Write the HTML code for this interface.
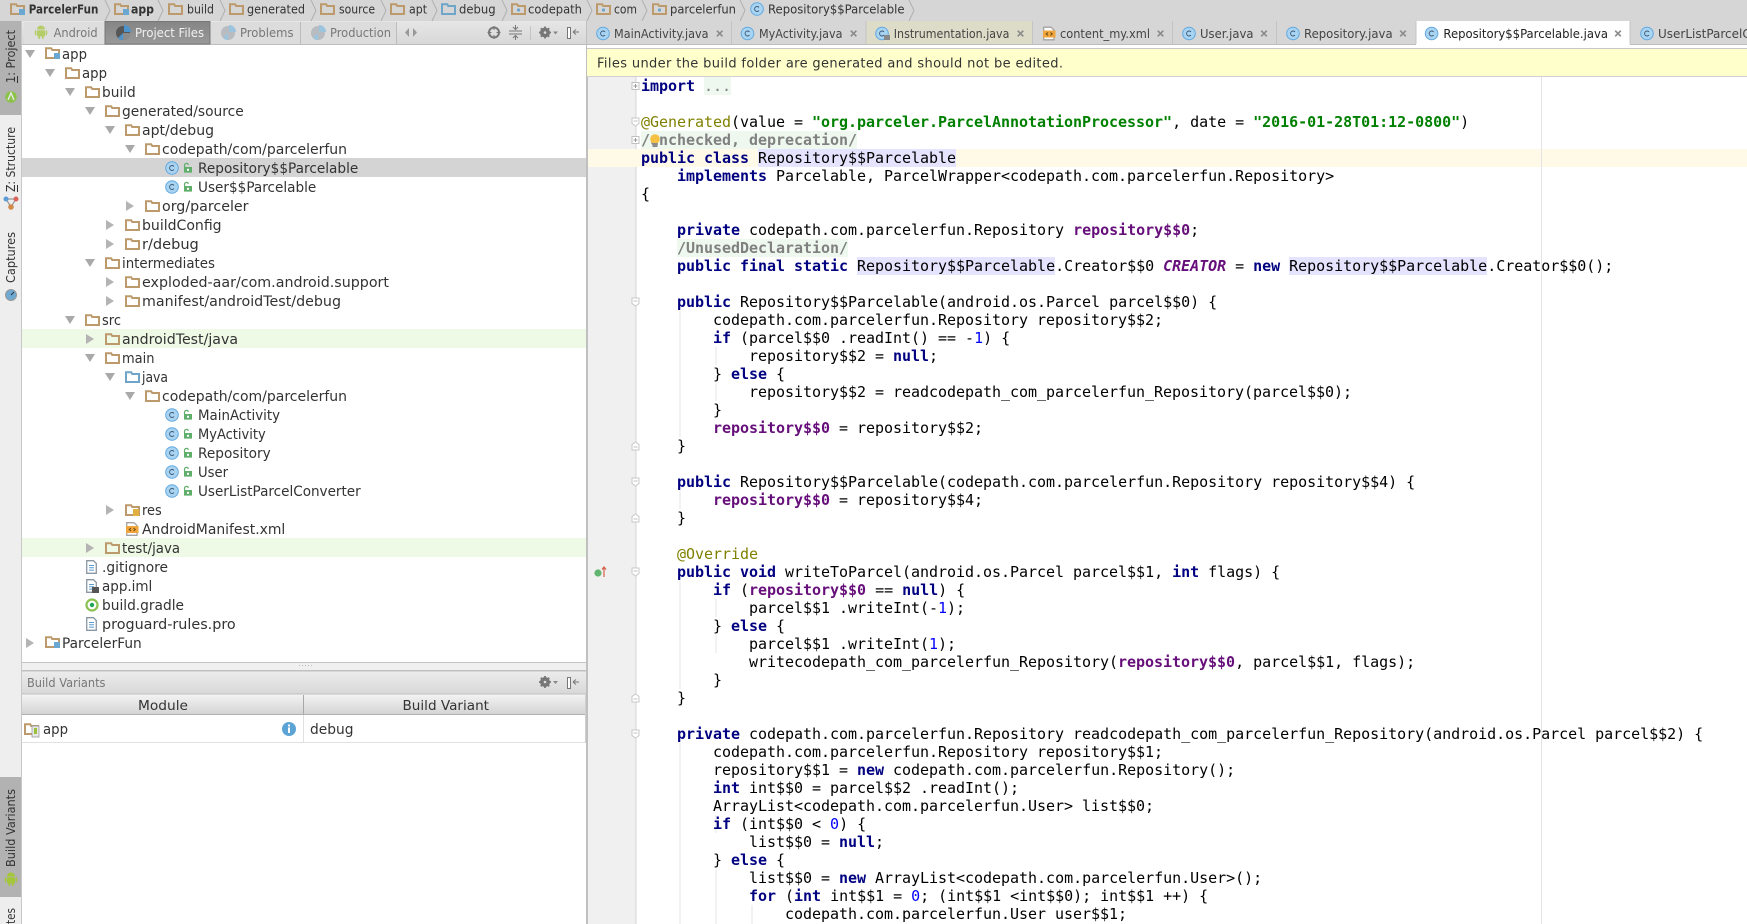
<!DOCTYPE html>
<html><head><meta charset="utf-8"><title>ParcelerFun</title>
<style>
html,body{margin:0;padding:0;background:#fff}
#p{position:relative;width:1747px;height:924px;overflow:hidden;background:#fff}
svg{position:absolute;left:0;top:0}
text{font-family:"DejaVu Sans",sans-serif;white-space:pre}
.t{font-size:14px;fill:#333}
.c{font-size:12px;fill:#444}
.tb{font-size:12px;fill:#555}
.s{font-size:12px;fill:#333}
pre{position:absolute;left:641px;top:77px;margin:0;font:15px/18px "DejaVu Sans Mono",monospace;letter-spacing:-.03px;color:#000;white-space:pre}
b{color:#000080;font-weight:bold}
.g{color:#008000;font-weight:bold}
.a{color:#808000}
.f{color:#660e7a;font-weight:bold}
.n{color:#0000ff}
.d{color:#808080;font-weight:bold;background:#eef8ee}
.u{background:#e4e4ff}
i{color:#660e7a;font-weight:bold;font-style:italic}
</style></head><body><div id="p">
<svg width="1747" height="924" viewBox="0 0 1747 924">
<defs>
<linearGradient id="hg" x1="0" y1="0" x2="0" y2="1"><stop offset="0" stop-color="#ececec"/><stop offset="1" stop-color="#d8d8d8"/></linearGradient>
<linearGradient id="th" x1="0" y1="0" x2="0" y2="1"><stop offset="0" stop-color="#f4f4f4"/><stop offset="1" stop-color="#d4d4d4"/></linearGradient>
<linearGradient id="tw" x1="0" y1="0" x2="0" y2="1"><stop offset="0" stop-color="#e6e6e6"/><stop offset="1" stop-color="#d8d8d8"/></linearGradient>
<linearGradient id="ta" x1="0" y1="0" x2="0" y2="1"><stop offset="0" stop-color="#858585"/><stop offset="1" stop-color="#999999"/></linearGradient>
<g id="fo"><path d="M1 11V1.200H6.200L7.200 3H14V11Z" fill="none" stroke="#bd9a6b" stroke-width="2"/></g>
<g id="fb"><path d="M1 11V1.200H6.200L7.200 3H14V11Z" fill="none" stroke="#6ea5c8" stroke-width="2"/></g>
<g id="fm"><path d="M1 11V1.200H6.200L7.200 3H14V11Z" fill="none" stroke="#bd9a6b" stroke-width="2"/><rect x="9" y="6" width="6" height="6" fill="#6aa8d2"/></g>
<g id="fp"><path d="M1 11V1.200H6.200L7.200 3H14V11Z" fill="none" stroke="#bd9a6b" stroke-width="2"/><circle cx="7.500" cy="7" r="1.600" fill="#6ea5c8"/></g>
<g id="da"><path d="M-5 -4H5L0 4Z" fill="#a9a9a9"/></g>
<g id="ra"><path d="M-4 -5V5L4 0Z" fill="#b4b4b4"/></g>
<g id="cl"><circle cx="7" cy="7" r="6.300" fill="#a8d4f2" stroke="#62a8e0" stroke-width="1"/><path d="M9 5.400A2.500 2.500 0 1 0 9 8.600" fill="none" stroke="#3c5878" stroke-width=".9"/></g>
<g id="lk"><path d="M1.500 4V2.300A2 2 0 0 1 5.400 1.800" fill="none" stroke="#5fae6a" stroke-width="1.200"/><rect x="1" y="4" width="8" height="5.600" fill="#5fae6a"/><rect x="4" y="5.800" width="2" height="2" fill="#fff"/></g>
<g id="pie"><circle cx="7" cy="8.500" r="7" fill="#b8bcc0"/><path d="M8 7.500V.500A7 7 0 0 1 15 7.500Z" fill="#9cc4de"/><path d="M7 8.500L2 13.500A7 7 0 0 0 7 15.500Z" fill="#9cc4de"/></g>
<g id="pa"><circle cx="7" cy="8.500" r="7" fill="#565656"/><path d="M8 7.500V.500A7 7 0 0 1 15 7.500Z" fill="#4d94cc"/><path d="M7 8.500L2 13.500A7 7 0 0 0 7 15.500Z" fill="#4d94cc"/><path d="M7 8.500H14A7 7 0 0 1 7 15.500Z" fill="#8c8c8c"/></g>
<g id="and"><path d="M3 5.500A4 4 0 0 1 11 5.500Z" fill="#a4c639"/><rect x="3" y="6.200" width="8" height="6.300" rx="1" fill="#a4c639"/><rect x=".8" y="6.200" width="1.600" height="5" rx=".8" fill="#a4c639"/><rect x="11.600" y="6.200" width="1.600" height="5" rx=".8" fill="#a4c639"/><rect x="4.400" y="12" width="1.700" height="3" rx=".8" fill="#a4c639"/><rect x="7.900" y="12" width="1.700" height="3" rx=".8" fill="#a4c639"/></g>
<g id="x"><path d="M-2.800 -2.800L2.800 2.800M2.800 -2.800L-2.800 2.800" stroke="#8c8c8c" stroke-width="1.700"/></g>
<g id="ch"><path d="M0 0L5 10.500L0 21" fill="none" stroke="#b0b0b0" stroke-width="1"/></g>
<g id="gear"><circle cx="6" cy="6" r="3.600" fill="none" stroke="#777" stroke-width="2.800"/><path d="M6 0V12M0 6H12M1.800 1.800L10.200 10.200M10.200 1.800L1.800 10.200" stroke="#777" stroke-width="1.800"/><circle cx="6" cy="6" r="1.300" fill="#e0e0e0"/><path d="M14 5H19L16.500 8Z" fill="#888"/></g>
<g id="hide"><path d="M.5 .5H3.500V11.500H.5Z" fill="#fff" stroke="#777"/><path d="M6 5H12M6 5L9 2.500M6 5L9 7.500" fill="none" stroke="#777"/></g>
<g id="doc"><path d="M.7 .7H7.500L10.300 3.500V13.300H.7Z" fill="#fff" stroke="#8a97a3" stroke-width="1.300"/><path d="M3 5.500H8M3 7.800H8M3 10.100H8" stroke="#5b9bd0" stroke-width="1"/></g>
<g id="xml"><path d="M.7 .7H8L11 3.500V13.300H.7Z" fill="#fff" stroke="#a3a3a3" stroke-width="1.300"/><rect x="0" y="4" width="12.500" height="7" fill="#f0a63c"/><path d="M5 6L3.200 7.500L5 9M7.500 6L9.300 7.500L7.500 9" fill="none" stroke="#6b4a12"/></g>
<g id="fold"><path d="M-3.500 -4H3.500V1.500L0 4L-3.500 1.500Z" fill="#fff" stroke="#c8c8c8"/><path d="M-2 -1H2" stroke="#c0c0c0"/></g>
<g id="foldp"><rect x="-3.500" y="-3.500" width="7" height="7" fill="#fff" stroke="#c0c0c0"/><path d="M-2 0H2M0 -2V2" stroke="#999"/></g>
</defs>

<!-- chrome backgrounds -->
<rect x="0" y="0" width="1747" height="21" fill="#d6d6d6"/>
<rect x="0" y="21" width="21" height="903" fill="#eeeeee"/>
<rect x="21" y="21" width="1" height="903" fill="#c8c8c8"/>
<rect x="0" y="21" width="21" height="94" fill="#b2b2b2"/>
<rect x="0" y="777" width="21" height="120" fill="#b2b2b2"/>

<!-- tool window tabs -->
<rect x="22" y="21" width="564" height="23" fill="url(#tw)"/>
<rect x="22" y="44" width="565" height="1" fill="#bdbdbd"/>
<rect x="24" y="22" width="81" height="22" fill="#dedede"/>
<rect x="105" y="21.500" width="105" height="22.500" fill="url(#ta)" stroke="#777"/>
<rect x="211" y="22" width="89" height="22" fill="#dcdcdc"/>
<rect x="301" y="22" width="95" height="22" fill="#dcdcdc"/>
<path d="M300.500 22V44M396.500 22V44" stroke="#bcbcbc"/>
<use href="#and" x="34" y="24" opacity=".7"/>
<text class="tb" x="53.600" y="37" textLength="44" lengthAdjust="spacingAndGlyphs" style="fill:#777">Android</text>
<use href="#pa" x="116" y="24.500"/>
<text class="tb" x="135" y="37" textLength="69" lengthAdjust="spacingAndGlyphs" style="fill:#f2f2f2">Project Files</text>
<use href="#pie" x="221" y="24.500"/>
<text class="tb" x="240" y="37" textLength="53.500" lengthAdjust="spacingAndGlyphs" style="fill:#777">Problems</text>
<use href="#pie" x="311" y="24.500"/>
<text class="tb" x="330" y="37" textLength="61" lengthAdjust="spacingAndGlyphs" style="fill:#777">Production</text>
<path d="M409 28V37L405 32.500ZM413 28V37L417 32.500Z" fill="#999"/>
<circle cx="494" cy="32.500" r="5" fill="none" stroke="#777" stroke-width="2"/><path d="M494 26V30M494 35V39M487.500 32.500H491.500M496.500 32.500H500.500" stroke="#777"/>
<path d="M509 31H522M509 34H522M515.500 25V29M515.500 36V40M513 27L515.500 29.500L518 27M513 38L515.500 35.500L518 38" fill="none" stroke="#777"/>
<path d="M530.500 26V40" stroke="#c4c4c4"/>
<use href="#gear" x="539" y="26.500"/>
<use href="#hide" x="567" y="27"/>

<!-- breadcrumb -->
<use href="#fm" x="10" y="3"/><text class="s" x="28.700" y="13.500" textLength="69.700" lengthAdjust="spacingAndGlyphs" font-weight="bold">ParcelerFun</text><use href="#ch" x="105"/>
<use href="#fm" x="114" y="3"/><text class="s" x="131" y="13.500" textLength="23" lengthAdjust="spacingAndGlyphs" font-weight="bold">app</text><use href="#ch" x="158"/>
<use href="#fo" x="168" y="3"/><text class="s" x="187" y="13.500" textLength="27" lengthAdjust="spacingAndGlyphs">build</text><use href="#ch" x="220"/>
<use href="#fo" x="229" y="3"/><text class="s" x="247" y="13.500" textLength="58" lengthAdjust="spacingAndGlyphs">generated</text><use href="#ch" x="311"/>
<use href="#fo" x="320" y="3"/><text class="s" x="339" y="13.500" textLength="36" lengthAdjust="spacingAndGlyphs">source</text><use href="#ch" x="381"/>
<use href="#fo" x="390" y="3"/><text class="s" x="409" y="13.500" textLength="18" lengthAdjust="spacingAndGlyphs">apt</text><use href="#ch" x="432"/>
<use href="#fb" x="441" y="3"/><text class="s" x="459" y="13.500" textLength="36.600" lengthAdjust="spacingAndGlyphs">debug</text><use href="#ch" x="502"/>
<use href="#fp" x="511" y="3"/><text class="s" x="528" y="13.500" textLength="54" lengthAdjust="spacingAndGlyphs">codepath</text><use href="#ch" x="587"/>
<use href="#fp" x="596" y="3"/><text class="s" x="614" y="13.500" textLength="23" lengthAdjust="spacingAndGlyphs">com</text><use href="#ch" x="642"/>
<use href="#fp" x="652" y="3"/><text class="s" x="670" y="13.500" textLength="66" lengthAdjust="spacingAndGlyphs">parcelerfun</text><use href="#ch" x="740"/>
<use href="#cl" x="750" y="2"/><text class="s" x="768" y="13.500" textLength="136.500" lengthAdjust="spacingAndGlyphs">Repository$$Parcelable</text><use href="#ch" x="909"/>

<!-- editor tabs -->
<rect x="587" y="21" width="1160" height="23" fill="#d6d6d6"/>
<rect x="866" y="21" width="167" height="23" fill="#dcdcc8"/>
<rect x="1416" y="21" width="214" height="24" fill="#ffffff"/>
<path d="M731.500 21V44M866 21V44M1032.500 21V44M1172.500 21V44M1276.500 21V44M1416 21V44M1630 21V44" stroke="#c4c4c4"/>
<rect x="587" y="44" width="829" height="1" fill="#bdbdbd"/><rect x="1630" y="44" width="117" height="1" fill="#bdbdbd"/>
<use href="#cl" x="596" y="26.500"/><text class="c" x="614" y="38" textLength="94.600" lengthAdjust="spacingAndGlyphs">MainActivity.java</text><use href="#x" x="719.700" y="33.500"/>
<use href="#cl" x="740.500" y="26.500"/><text class="c" x="759" y="38" textLength="83.500" lengthAdjust="spacingAndGlyphs">MyActivity.java</text><use href="#x" x="853.600" y="33.500"/>
<use href="#cl" x="875" y="26.500"/><rect x="884" y="35" width="6" height="5" fill="#888"/><text class="c" x="893.800" y="38" textLength="115.600" lengthAdjust="spacingAndGlyphs">Instrumentation.java</text><use href="#x" x="1020.500" y="33.500"/>
<use href="#xml" x="1043" y="26.500"/><text class="c" x="1060" y="38" textLength="90" lengthAdjust="spacingAndGlyphs">content_my.xml</text><use href="#x" x="1160.500" y="33.500"/>
<use href="#cl" x="1182" y="26.500"/><text class="c" x="1200" y="38" textLength="53.500" lengthAdjust="spacingAndGlyphs">User.java</text><use href="#x" x="1264" y="33.500"/>
<use href="#cl" x="1286" y="26.500"/><text class="c" x="1304" y="38" textLength="88.600" lengthAdjust="spacingAndGlyphs">Repository.java</text><use href="#x" x="1403" y="33.500"/>
<use href="#cl" x="1424.600" y="26.500"/><text class="c" x="1443.400" y="38" textLength="164.600" lengthAdjust="spacingAndGlyphs" style="fill:#222">Repository$$Parcelable.java</text><use href="#x" x="1618" y="33.500"/>
<use href="#cl" x="1640" y="26.500"/><text class="c" x="1658" y="38">UserListParcelC</text>

<!-- banner -->
<rect x="587" y="45" width="1160" height="3" fill="#fff"/>
<rect x="587" y="48" width="1160" height="28" fill="#ffffcc"/>
<rect x="587" y="48" width="1160" height="1" fill="#c8c8c8"/>
<rect x="587" y="76" width="1160" height="1" fill="#d0d0d0"/>
<text x="597" y="67.500" font-size="13" fill="#333" textLength="466">Files under the build folder are generated and should not be edited.</text>

<!-- editor bg -->
<rect x="587" y="77" width="49" height="847" fill="#f0f0f0"/>
<rect x="635.500" y="77" width="1" height="847" fill="#d4d4d4"/>
<rect x="587" y="149" width="1160" height="18" fill="#fffae8"/>
<rect x="1541" y="77" width="1" height="847" fill="#e4e4e4"/>
<rect x="587" y="77" width="1" height="847" fill="#c0c0c0"/>
<rect x="586" y="21" width="1" height="903" fill="#bfbfbf"/>
<path d="M680 311V437M680 491V509M680 581V689M680 743V924M716 347V365M716 383V401M716 599V617M716 635V653M716 815V833M716 869V924M752 905V924" stroke="#e6e6e6"/>
<use href="#foldp" x="635.500" y="86"/><use href="#fold" x="635.500" y="122"/><use href="#foldp" x="635.500" y="140"/>
<use href="#fold" x="635.500" y="302"/><use href="#fold" x="635.500" y="446" transform="rotate(180 635.500 446)"/><use href="#fold" x="635.500" y="482"/><use href="#fold" x="635.500" y="518" transform="rotate(180 635.500 518)"/>
<use href="#fold" x="635.500" y="572"/><use href="#fold" x="635.500" y="698" transform="rotate(180 635.500 698)"/><use href="#fold" x="635.500" y="734"/>
<circle cx="598" cy="573" r="3.600" fill="#62b56e"/><path d="M604 577V567M602 569.500L604 567L606 569.500" fill="none" stroke="#d4604a" stroke-width="1.200"/>

<!-- tree -->
<rect x="22" y="45" width="564" height="617" fill="#fff"/>
<rect x="22" y="158" width="564" height="19" fill="#d4d4d4"/>
<rect x="22" y="329" width="564" height="19" fill="#eef9e6"/>
<rect x="22" y="538" width="564" height="19" fill="#eef9e6"/>
<use href="#da" x="30" y="54"/><use href="#fm" x="45" y="47"/><text class="t" x="62" y="59" textLength="25" lengthAdjust="spacingAndGlyphs">app</text>
<use href="#da" x="50" y="73"/><use href="#fo" x="65" y="67"/><text class="t" x="82" y="78" textLength="25" lengthAdjust="spacingAndGlyphs">app</text>
<use href="#da" x="70" y="92"/><use href="#fo" x="85" y="86"/><text class="t" x="102" y="97" textLength="33.700" lengthAdjust="spacingAndGlyphs">build</text>
<use href="#da" x="90" y="111"/><use href="#fo" x="105" y="105"/><text class="t" x="122" y="116" textLength="121.700" lengthAdjust="spacingAndGlyphs">generated/source</text>
<use href="#da" x="110" y="130"/><use href="#fo" x="125" y="124"/><text class="t" x="142" y="135" textLength="72" lengthAdjust="spacingAndGlyphs">apt/debug</text>
<use href="#da" x="130" y="149"/><use href="#fo" x="145" y="143"/><text class="t" x="162" y="154" textLength="185" lengthAdjust="spacingAndGlyphs">codepath/com/parcelerfun</text>
<use href="#cl" x="165" y="161"/><use href="#lk" x="183" y="163"/><text class="t" x="198" y="173" textLength="160.300" lengthAdjust="spacingAndGlyphs">Repository$$Parcelable</text>
<use href="#cl" x="165" y="180"/><use href="#lk" x="183" y="182"/><text class="t" x="198" y="192" textLength="118.300" lengthAdjust="spacingAndGlyphs">User$$Parcelable</text>
<use href="#ra" x="130" y="206"/><use href="#fo" x="145" y="200"/><text class="t" x="162" y="211" textLength="86.500" lengthAdjust="spacingAndGlyphs">org/parceler</text>
<use href="#ra" x="110" y="225"/><use href="#fo" x="125" y="219"/><text class="t" x="142" y="230" textLength="79.600" lengthAdjust="spacingAndGlyphs">buildConfig</text>
<use href="#ra" x="110" y="244"/><use href="#fo" x="125" y="238"/><text class="t" x="142" y="249" textLength="56.800" lengthAdjust="spacingAndGlyphs">r/debug</text>
<use href="#da" x="90" y="263"/><use href="#fo" x="105" y="257"/><text class="t" x="122" y="268" textLength="93" lengthAdjust="spacingAndGlyphs">intermediates</text>
<use href="#ra" x="110" y="282"/><use href="#fo" x="125" y="276"/><text class="t" x="142" y="287" textLength="247" lengthAdjust="spacingAndGlyphs">exploded-aar/com.android.support</text>
<use href="#ra" x="110" y="301"/><use href="#fo" x="125" y="295"/><text class="t" x="142" y="306" textLength="199" lengthAdjust="spacingAndGlyphs">manifest/androidTest/debug</text>
<use href="#da" x="70" y="320"/><use href="#fo" x="85" y="314"/><text class="t" x="102" y="325" textLength="19" lengthAdjust="spacingAndGlyphs">src</text>
<use href="#ra" x="90" y="339"/><use href="#fo" x="105" y="333"/><text class="t" x="122" y="344" textLength="116" lengthAdjust="spacingAndGlyphs">androidTest/java</text>
<use href="#da" x="90" y="358"/><use href="#fo" x="105" y="352"/><text class="t" x="122" y="363" textLength="32.500" lengthAdjust="spacingAndGlyphs">main</text>
<use href="#da" x="110" y="377"/><use href="#fb" x="125" y="371"/><text class="t" x="142" y="382" textLength="26" lengthAdjust="spacingAndGlyphs">java</text>
<use href="#da" x="130" y="396"/><use href="#fo" x="145" y="390"/><text class="t" x="162" y="401" textLength="185" lengthAdjust="spacingAndGlyphs">codepath/com/parcelerfun</text>
<use href="#cl" x="165" y="408"/><use href="#lk" x="183" y="410"/><text class="t" x="198" y="420" textLength="82" lengthAdjust="spacingAndGlyphs">MainActivity</text>
<use href="#cl" x="165" y="427"/><use href="#lk" x="183" y="429"/><text class="t" x="198" y="439" textLength="67.700" lengthAdjust="spacingAndGlyphs">MyActivity</text>
<use href="#cl" x="165" y="446"/><use href="#lk" x="183" y="448"/><text class="t" x="198" y="458" textLength="72.700" lengthAdjust="spacingAndGlyphs">Repository</text>
<use href="#cl" x="165" y="465"/><use href="#lk" x="183" y="467"/><text class="t" x="198" y="477" textLength="30" lengthAdjust="spacingAndGlyphs">User</text>
<use href="#cl" x="165" y="484"/><use href="#lk" x="183" y="486"/><text class="t" x="198" y="496" textLength="162.700" lengthAdjust="spacingAndGlyphs">UserListParcelConverter</text>
<use href="#ra" x="110" y="510"/><use href="#fo" x="125" y="504"/><rect x="133" y="509" width="6" height="7" fill="#e0b040"/><text class="t" x="142" y="515" textLength="19.700" lengthAdjust="spacingAndGlyphs">res</text>
<use href="#xml" x="126" y="522"/><text class="t" x="142" y="534" textLength="143.300" lengthAdjust="spacingAndGlyphs">AndroidManifest.xml</text>
<use href="#ra" x="90" y="548"/><use href="#fo" x="105" y="542"/><text class="t" x="122" y="553" textLength="58" lengthAdjust="spacingAndGlyphs">test/java</text>
<use href="#doc" x="86" y="560"/><text class="t" x="102" y="572" textLength="66" lengthAdjust="spacingAndGlyphs">.gitignore</text>
<use href="#doc" x="86" y="579"/><rect x="92" y="587" width="7" height="6" fill="#555"/><text class="t" x="102" y="591" textLength="50.300" lengthAdjust="spacingAndGlyphs">app.iml</text>
<circle cx="92" cy="605" r="5.500" fill="none" stroke="#8cc152" stroke-width="2.200"/><circle cx="92" cy="605" r="2.200" fill="#1fa65b"/><text class="t" x="102" y="610" textLength="82" lengthAdjust="spacingAndGlyphs">build.gradle</text>
<use href="#doc" x="86" y="617"/><text class="t" x="102" y="629" textLength="133.700" lengthAdjust="spacingAndGlyphs">proguard-rules.pro</text>
<use href="#ra" x="30" y="643"/><use href="#fm" x="45" y="636"/><text class="t" x="62" y="648" textLength="79.700" lengthAdjust="spacingAndGlyphs">ParcelerFun</text>

<!-- build variants panel -->
<rect x="22" y="662" width="564" height="1" fill="#c4c4c4"/>
<rect x="22" y="663" width="564" height="7" fill="#f0f0f0"/>
<path d="M299 665.500H312" stroke="#bbb" stroke-dasharray="1 2"/>
<rect x="22" y="670" width="564" height="1.500" fill="#c0c0c0"/>
<rect x="22" y="671.500" width="564" height="22.500" fill="url(#hg)"/>
<text x="27" y="687" font-size="12" fill="#777" textLength="78.500" lengthAdjust="spacingAndGlyphs">Build Variants</text>
<use href="#gear" x="539" y="676"/><use href="#hide" x="567" y="677"/>
<rect x="22" y="694" width="564" height="20" fill="url(#th)"/>
<rect x="22" y="693.500" width="564" height="1" fill="#c0c0c0"/>
<rect x="22" y="714" width="564" height="1" fill="#b0b0b0"/>
<rect x="303" y="695" width="1" height="19" fill="#a8a8a8"/>
<text x="138" y="710" font-size="13.500" fill="#333" textLength="50" lengthAdjust="spacingAndGlyphs">Module</text>
<text x="402.500" y="710" font-size="13.500" fill="#333" textLength="86.500" lengthAdjust="spacingAndGlyphs">Build Variant</text>
<rect x="22" y="742" width="564" height="1" fill="#e0e0e0"/>
<rect x="303" y="715" width="1" height="27" fill="#e0e0e0"/>
<rect x="585" y="694" width="1" height="49" fill="#d0d0d0"/>
<use href="#fo" x="24" y="723"/><rect x="32" y="726" width="7" height="11" fill="#e8e8e8" stroke="#999" stroke-width=".8"/><rect x="34" y="728" width="3" height="6" fill="#9bc13c"/>
<text class="t" x="43" y="734" textLength="25" lengthAdjust="spacingAndGlyphs">app</text>
<circle cx="289" cy="729" r="7" fill="#5da4d6"/><rect x="288" y="727.500" width="2" height="5.500" fill="#fff"/><rect x="288" y="724.500" width="2" height="2" fill="#fff"/>
<text class="t" x="310" y="734" textLength="43.500" lengthAdjust="spacingAndGlyphs">debug</text>

<!-- left strip labels -->
<text transform="translate(15,83) rotate(-90)" font-size="12" fill="#333" textLength="53" lengthAdjust="spacingAndGlyphs">1: Project</text>
<path d="M17.500 83V76" stroke="#333"/>
<circle cx="11" cy="97" r="5.800" fill="#8bc34a"/><path d="M8 100L11 93L14 100" fill="none" stroke="#e8e8e8" stroke-width="1.400"/>
<text transform="translate(15,192) rotate(-90)" font-size="12" fill="#333" textLength="65" lengthAdjust="spacingAndGlyphs">Z: Structure</text>
<path d="M17.500 192V185" stroke="#333"/>
<path d="M6 199L11 207L16 199L6 199" fill="none" stroke="#999" stroke-width="1.200"/><circle cx="6" cy="199" r="2.500" fill="#5c9bd6"/><circle cx="16" cy="199" r="2.500" fill="#d9655a"/><circle cx="11" cy="207" r="2.800" fill="#d08a4a"/>
<text transform="translate(15,283) rotate(-90)" font-size="12" fill="#333" textLength="51" lengthAdjust="spacingAndGlyphs">Captures</text>
<circle cx="11" cy="295" r="5.500" fill="#6fa8d0" stroke="#999"/><path d="M11 295L14 292" stroke="#234" stroke-width="1"/>
<text transform="translate(15,867) rotate(-90)" font-size="12" fill="#333" textLength="78" lengthAdjust="spacingAndGlyphs">Build Variants</text>
<use href="#and" x="4" y="871"/>
<text transform="translate(15,924) rotate(-90)" font-size="12" fill="#333" textLength="16" lengthAdjust="spacingAndGlyphs">tes</text>
</svg>

<pre><b>import</b> <span class="d" style="font-weight:normal">...</span>

<span class="a">@Generated</span>(value = <span class="g">"org.parceler.ParcelAnnotationProcessor"</span>, date = <span class="g">"2016-01-28T01:12-0800"</span>)
<span class="d">/unchecked, deprecation/</span>
<b>public class</b> <span class="u">Repository$$Parcelable</span>
    <b>implements</b> Parcelable, ParcelWrapper&lt;codepath.com.parcelerfun.Repository&gt;
{

    <b>private</b> codepath.com.parcelerfun.Repository <span class="f">repository$$0</span>;
    <span class="d">/UnusedDeclaration/</span>
    <b>public final static</b> <span class="u">Repository$$Parcelable</span>.Creator$$0 <i>CREATOR</i> = <b>new</b> <span class="u">Repository$$Parcelable</span>.Creator$$0();

    <b>public</b> Repository$$Parcelable(android.os.Parcel parcel$$0) {
        codepath.com.parcelerfun.Repository repository$$2;
        <b>if</b> (parcel$$0 .readInt() == -<span class="n">1</span>) {
            repository$$2 = <b>null</b>;
        } <b>else</b> {
            repository$$2 = readcodepath_com_parcelerfun_Repository(parcel$$0);
        }
        <span class="f">repository$$0</span> = repository$$2;
    }

    <b>public</b> Repository$$Parcelable(codepath.com.parcelerfun.Repository repository$$4) {
        <span class="f">repository$$0</span> = repository$$4;
    }

    <span class="a">@Override</span>
    <b>public void</b> writeToParcel(android.os.Parcel parcel$$1, <b>int</b> flags) {
        <b>if</b> (<span class="f">repository$$0</span> == <b>null</b>) {
            parcel$$1 .writeInt(-<span class="n">1</span>);
        } <b>else</b> {
            parcel$$1 .writeInt(<span class="n">1</span>);
            writecodepath_com_parcelerfun_Repository(<span class="f">repository$$0</span>, parcel$$1, flags);
        }
    }

    <b>private</b> codepath.com.parcelerfun.Repository readcodepath_com_parcelerfun_Repository(android.os.Parcel parcel$$2) {
        codepath.com.parcelerfun.Repository repository$$1;
        repository$$1 = <b>new</b> codepath.com.parcelerfun.Repository();
        <b>int</b> int$$0 = parcel$$2 .readInt();
        ArrayList&lt;codepath.com.parcelerfun.User&gt; list$$0;
        <b>if</b> (int$$0 &lt; <span class="n">0</span>) {
            list$$0 = <b>null</b>;
        } <b>else</b> {
            list$$0 = <b>new</b> ArrayList&lt;codepath.com.parcelerfun.User&gt;();
            <b>for</b> (<b>int</b> int$$1 = <span class="n">0</span>; (int$$1 &lt;int$$0); int$$1 ++) {
                codepath.com.parcelerfun.User user$$1;</pre>

<svg width="1747" height="924" viewBox="0 0 1747 924" style="pointer-events:none">
<circle cx="655" cy="139" r="4.800" fill="#f5c043"/><rect x="652.500" y="143" width="5" height="4" fill="#8a8a8a"/>
</svg>
</div></body></html>
